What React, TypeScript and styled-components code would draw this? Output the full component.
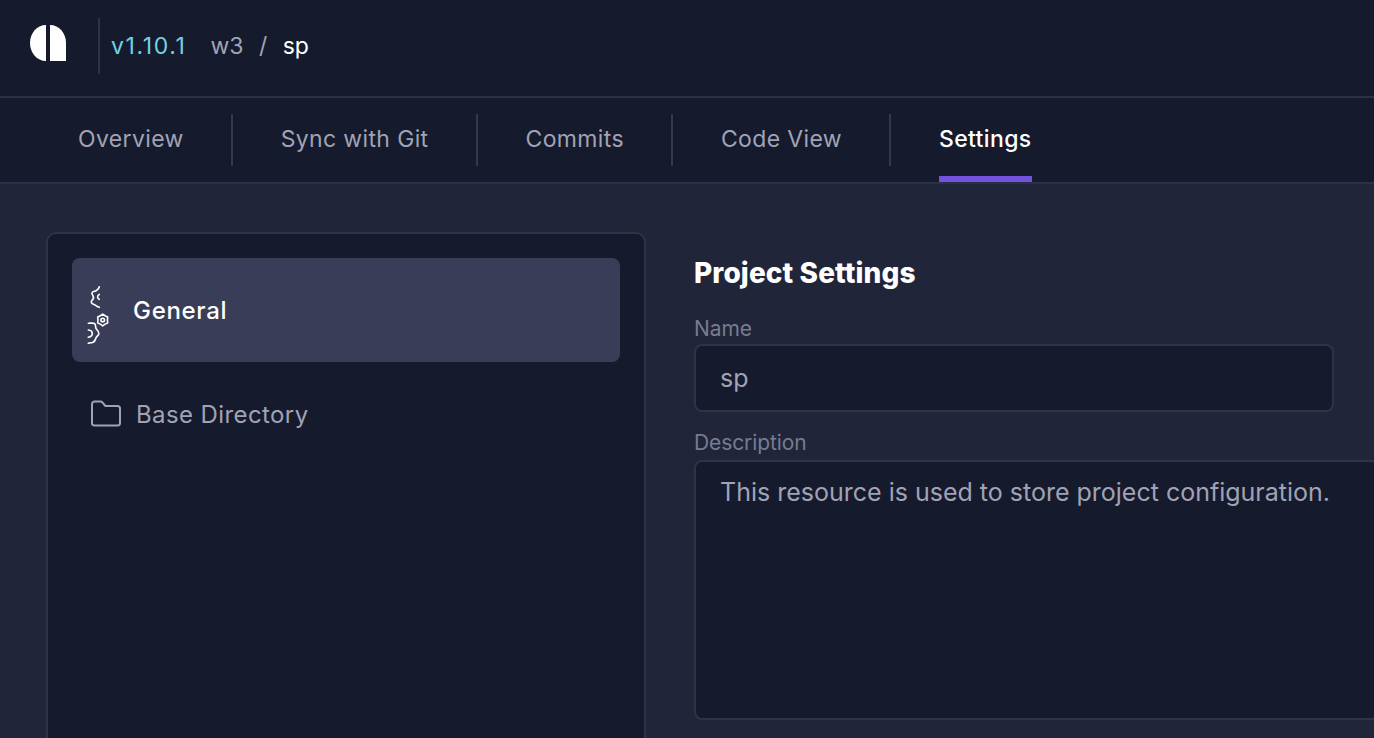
import React from 'react';
import styled, { createGlobalStyle } from 'styled-components';

const GlobalStyle = createGlobalStyle`
  html, body {
    margin: 0;
    height: 100%;
    overflow: hidden;
    background: #212539;
  }
  #root {
    height: 100%;
  }
  * {
    box-sizing: border-box;
  }
`;

const Page = styled.div`
  width: 1374px;
  height: 738px;
  overflow: hidden;
  display: flex;
  flex-direction: column;
  background: #212539;
  font-family: Inter, 'Liberation Sans', sans-serif;
`;

const TopBar = styled.header`
  height: 98px;
  flex: none;
  display: flex;
  align-items: center;
  padding: 0 0 4px 30px;
  background: #161a2d;
  border-bottom: 2px solid #2c3044;
`;

const Logo = styled.svg`
  width: 36px;
  height: 36px;
  flex: none;
  margin: 0 32px 6px 0;
`;

const Breadcrumbs = styled.div`
  height: 56px;
  display: flex;
  align-items: center;
  padding-left: 11px;
  border-left: 2px solid #2f3347;
  font-size: 23px;
`;

const Version = styled.span`
  color: #71d2e6;
  margin-right: 24px;
  letter-spacing: 1.6px;
`;

const Crumb = styled.span<{ $current?: boolean }>`
  color: ${(p) => (p.$current ? '#ffffff' : '#a1a3b5')};
`;

const Slash = styled.span`
  color: #a1a3b5;
  margin: 0 15.500px;
`;

const TabBar = styled.nav`
  height: 86px;
  flex: none;
  display: flex;
  align-items: flex-start;
  padding: 16px 0 0 30px;
  background: #161a2d;
  border-bottom: 2px solid #2c3044;
`;

const Tab = styled.div<{ $active?: boolean }>`
  position: relative;
  height: 52px;
  padding: 0 47px 2px 48px;
  display: flex;
  align-items: center;
  font-size: 23px;
  letter-spacing: 0.36px;
  color: ${(p) => (p.$active ? '#ffffff' : '#a1a3b5')};
  font-weight: ${(p) => (p.$active ? 500 : 400)};
  border-right: 2px solid ${(p) => (p.$active ? 'transparent' : '#34384d')};
`;

const TabMarker = styled.span`
  position: absolute;
  left: 48px;
  right: 47px;
  top: 62px;
  height: 6px;
  background: #7352dd;
`;

const Content = styled.main`
  flex: 1;
  min-height: 0;
  display: flex;
  gap: 48px;
  padding: 48px 0 0 46px;
`;

const SidePanel = styled.aside`
  width: 600px;
  height: 620px;
  flex: none;
  padding: 24px;
  background: #161a2d;
  border: 2px solid #2f3347;
  border-radius: 10px;
`;

const SideItem = styled.div<{ $active?: boolean }>`
  height: 104px;
  display: flex;
  align-items: center;
  padding-left: 14px;
  border-radius: 8px;
  font-size: 24px;
  letter-spacing: ${(p) => (p.$active ? '0.7px' : '0.4px')};
  background: ${(p) => (p.$active ? '#3a3d57' : 'transparent')};
  color: ${(p) => (p.$active ? '#ffffff' : '#a1a3b5')};
  font-weight: ${(p) => (p.$active ? 500 : 400)};
`;

const GeneralIcon = styled.svg`
  width: 26px;
  height: 68px;
  flex: none;
  margin-right: 21px;
`;

const FolderIcon = styled.svg`
  width: 32px;
  height: 28px;
  flex: none;
  margin: 0 14px 0 4px;
`;

const Form = styled.section`
  flex: none;
  width: 800px;
  padding-top: 23px;
`;

const Title = styled.h1`
  margin: 0 0 23px;
  font-size: 28px;
  line-height: 36px;
  font-weight: 800;
  letter-spacing: 0.1px;
  color: #ffffff;
`;

const FieldLabel = styled.label`
  display: block;
  height: 30px;
  font-size: 21px;
  line-height: 30px;
  letter-spacing: -0.1px;
  color: #787b91;
`;

const fieldStyles = `
  display: block;
  background: #161a2d;
  border: 2px solid #2f3347;
  border-radius: 8px;
  color: #a1a3b5;
  font-family: Inter, 'Liberation Sans', sans-serif;
  font-size: 25px;
  outline: none;
`;

const NameInput = styled.input`
  ${fieldStyles}
  width: 640px;
  height: 68px;
  margin: 0 0 16px;
  padding: 0 24px;
`;

const DescriptionInput = styled.textarea`
  ${fieldStyles}
  width: 760px;
  height: 260px;
  margin: 2px 0 0;
  padding: 12px 24px;
  line-height: 36px;
  resize: none;
`;

const tabs = ['Overview', 'Sync with Git', 'Commits', 'Code View', 'Settings'];

const App = () => (
  <Page>
    <GlobalStyle />
    <TopBar>
      <Logo viewBox="0 0 36 36">
        <path d="M16 0C7 0 0 8 0 18s7 18 16 18z" fill="#fff" />
        <path d="M20 0c9 0 16 8 16 18v18H20z" fill="#fff" />
      </Logo>
      <Breadcrumbs>
        <Version>v1.10.1</Version>
        <Crumb>w3</Crumb>
        <Slash>/</Slash>
        <Crumb $current>sp</Crumb>
      </Breadcrumbs>
    </TopBar>
    <TabBar>
      {tabs.map((tab) => (
        <Tab key={tab} $active={tab === 'Settings'}>
          {tab}
          {tab === 'Settings' && <TabMarker />}
        </Tab>
      ))}
    </TabBar>
    <Content>
      <SidePanel>
        <SideItem $active>
          <GeneralIcon viewBox="86 276 26 68" fill="none" stroke="#fff" strokeWidth="1.6" strokeLinecap="round" strokeLinejoin="round">
            <path d="M99.300 286.700C98.500 289.500 96 291 93.500 291.500C91 292.500 92 294.500 93 295.800C94.200 297.800 93.500 299 92 300.300C90.500 302 91.500 303.500 93.500 304.300C95.500 304.800 96.500 306.500 99.300 307.300" />
            <path d="M99.300 294.300C97 296 97 297.800 99.300 299.300" />
            <path d="M88.300 323.300C91 323.300 93.500 322.500 94.800 323.800C96 325.500 95.300 327.500 96.300 329C97.500 330.500 99.300 332 98.800 334C98.300 335.800 96.300 336.500 95.800 338.300C95.300 340.500 94.500 342 92.500 342.500C91 342.800 89.500 343 88.300 343.300" />
            <path d="M88.300 330C91 330.300 92.300 331.800 92.300 333.500C92.300 335.300 91 336.800 88.300 337.300" />
            <circle cx="102.700" cy="320" r="1.800" />
            <path d="M102.700 314.200Q104.900 316.200 107.700 317.100Q107.100 320 107.700 322.900Q104.900 323.800 102.700 325.800Q100.500 323.800 97.700 322.900Q98.300 320 97.700 317.100Q100.500 316.200 102.700 314.200z" />
          </GeneralIcon>
          General
        </SideItem>
        <SideItem>
          <FolderIcon viewBox="0 0 32 28" fill="none" stroke="#a1a3b5" strokeWidth="2" strokeLinejoin="round">
            <path d="M2 4a2.500 2.500 0 0 1 2.500-2.500h6a2.500 2.500 0 0 1 1.800.8l3.200 3.700h12a2.500 2.500 0 0 1 2.500 2.500v14.500a2.500 2.500 0 0 1-2.500 2.500h-23A2.500 2.500 0 0 1 2 24z" />
          </FolderIcon>
          Base Directory
        </SideItem>
      </SidePanel>
      <Form>
        <Title>Project Settings</Title>
        <FieldLabel htmlFor="name">Name</FieldLabel>
        <NameInput id="name" readOnly value="sp" />
        <FieldLabel htmlFor="description">Description</FieldLabel>
        <DescriptionInput
          id="description"
          readOnly
          value="This resource is used to store project configuration."
        />
      </Form>
    </Content>
  </Page>
);

export default App;
